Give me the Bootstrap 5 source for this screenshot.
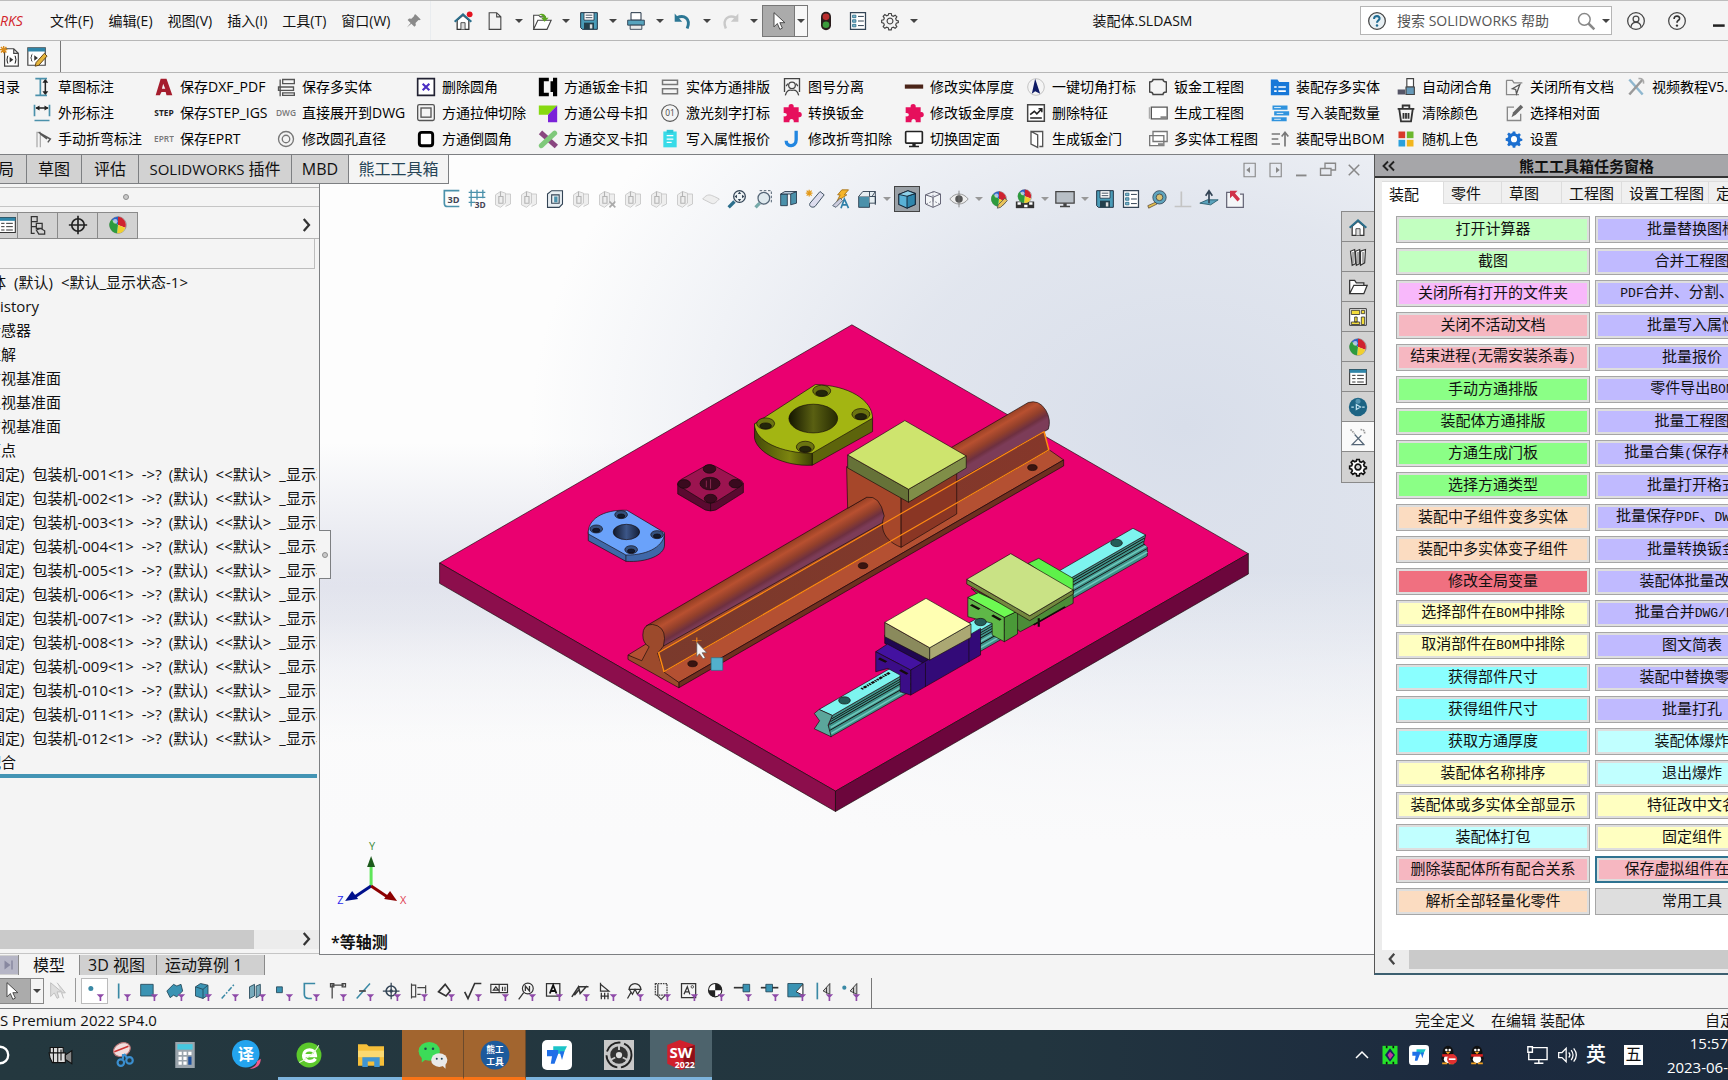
<!DOCTYPE html>
<html lang="zh-CN">
<head>
<meta charset="utf-8">
<meta name="viewport" content="width=device-width, initial-scale=1">
<title>装配体.SLDASM</title>
<link href="https://cdn.jsdelivr.net/npm/bootstrap@5.3.0/dist/css/bootstrap.min.css" rel="stylesheet">
<style>
:root{--line:#a9a9a9;--edge:#7d7f82;--chrome:#f4f4f4;--tabgrey:#d2d2d2}
body{font-family:"Open Sans","Noto Sans CJK SC",sans-serif;font-size:14px;line-height:20px;color:#111;background:var(--chrome);overflow:hidden}
button{font:inherit;color:inherit;background:none;border:0;padding:0;white-space:nowrap}
svg{display:block;flex:none}
.nw{white-space:nowrap}
.min0{min-width:0;min-height:0}
.s18{width:18px;height:18px}.s20{width:20px;height:20px}.s22{width:22px;height:22px}.s26{width:26px;height:26px}.s30{width:30px;height:30px}
.ic{display:block;flex:none;font-style:normal}.ic svg{width:100%;height:100%}
/* title bar */
.titlebar{height:41px;border-top:1px solid #bdbdbd;border-bottom:1px solid #b7b7b7}
.brand{width:34px;overflow:hidden;color:#d2232a;font-style:italic;font-size:14px}
.menus{gap:15px;width:396px;flex:none}
.menus button{flex:none}
.tool{width:32px;height:32px;display:flex;align-items:center;justify-content:center}
.caret-b{width:15px;height:32px;display:flex;align-items:center;justify-content:center}
.caret-b::after{content:"";border:4px solid transparent;border-top-color:#444;border-bottom:0}
.caret-b.dim::after{border-top-color:#999}
.selgrp{border:1px solid #777;height:32px;width:46px;margin:0 2px 0 1px}
.selgrp .tool{width:32px;background:#ababab;height:30px}.selgrp .caret-b{width:13px;height:30px;border-left:1px solid #777;background:#f7f7f7}
.searchbox{width:252px;height:29px;border:1px solid #b5b5b5;background:#fff;padding-left:6px}
.searchbox input{border:0;outline:0;background:none;width:184px;font-size:14px;color:#555}
.searchbox input::placeholder{color:#555;opacity:1}
.acct{gap:21px;padding-left:14px}
.macrobar{height:32px;border-bottom:1px solid #b7b7b7}
.macrobar>div{width:61px;border-right:1px solid #777}
/* ribbon */
.ribbon{height:81px;padding-top:1px}
.rcol{width:122px;flex:none}
.rcol-first{width:32px}.rcol-140{width:140px}.rcol-126{width:126px}.rcol-108{width:108px}
.ritem{display:flex;align-items:center;gap:6px;height:26px;color:#000}
.rcol-first .ritem{width:32px;justify-content:flex-end;padding-right:12px;overflow:hidden}
/* work area */
.work-tabs{width:449px;height:30px;border-top:1px solid var(--edge);position:relative;z-index:2}
.work-tabs button{font-size:16px;height:29px;background:var(--tabgrey);border-right:1px solid var(--edge);border-bottom:1px solid var(--edge);flex:none;overflow:hidden}
.work-tabs .on{background:var(--chrome);flex:1;color:#274556}
.work-tabs .cutl{width:27px;display:flex;justify-content:flex-end;align-items:center;padding-right:12px}
.t55{width:55px}.t57{width:57px}.t153{width:153px}
.latin{font-size:15px}
.sidepane{width:320px;flex:none;border-right:1px solid var(--edge);position:relative}
.grip{height:20px;border-top:1px solid #b5b5b5;border-bottom:1px solid #c5c5c5;margin-top:3px;padding-right:67px}
.dot{width:6px;height:6px;border-radius:50%;background:#c9c9c9;border:1px solid #8d8d8d}
.ptabs{height:27px;margin-top:5px;border-bottom:1px solid #b5b5b5}
.ptabs button{width:40px;height:27px;background:var(--tabgrey);border:1px solid #8a8a8a;border-left:0;display:flex;align-items:center;justify-content:center}
.ptabs button:first-child{width:18px;overflow:hidden;justify-content:flex-end}
.filterbox{height:30px;width:315px;border:1px solid #bdbdbd;border-left:0;border-top:0;background:#f4f4f4;outline:0}
.tree{font-size:15px;line-height:24px;width:317px;overflow:hidden;border-bottom:4px solid #4394b4;padding-top:1px}
.tree li{height:24px;white-space:nowrap;display:flex;gap:8px}
.tree .t1{margin-left:-9px}.tree .t2{margin-left:-11px}.tree .t3{margin-left:-14px}.tree .t4{margin-left:-10px}
.tree .nm{width:109px}
.tree .ar{width:19px}
.hs{height:19px;background:#ececec}
.hs .thumb{width:254px;background:#cacaca}
.paneend{height:5px;border-bottom:1px solid #c5c5c5;margin-bottom:1px}
.handle{position:absolute;right:-12px;top:376px;width:12px;height:49px;background:#f4f4f4;border:1px solid var(--edge);border-left:0;z-index:3}
.viewport{border-top:1px solid var(--edge);border-bottom:1px solid var(--edge);overflow:hidden;
background:linear-gradient(180deg,transparent 52%,rgba(252,252,253,.4) 64%,#fafafb 86%),
radial-gradient(ellipse 62% 60% at 82% 34%,#d8deea 0,rgba(221,226,236,.85) 45%,rgba(250,250,252,0) 100%),
linear-gradient(180deg,#fdfdfd 36%,#e0e2ec 54%,#e1e3ec 58%,#fafafa 74%)}
.scene{position:absolute;inset:0;width:100%;height:100%}
.hud{position:absolute;left:118px;top:31px;display:flex}
.hud button{width:26px;height:26px;display:flex;align-items:center;justify-content:center}
.hud .caret-b{width:14px;height:26px}
.hud .on{border:1px solid #444;background:#9aa0a6}
.wctl{position:absolute;right:7px;top:2px;display:flex}
.wctl button{width:26px;height:26px;display:flex;align-items:center;justify-content:center}
.vtabs{position:absolute;right:0;top:56px;width:33px;border:1px solid #8a8a8a;border-right:0}
.vtabs button{width:32px;height:30px;background:var(--tabgrey);display:flex;align-items:center;justify-content:center;border-bottom:1px solid #8a8a8a}
.vtabs button:last-child{border-bottom:0}.vtabs .on{background:#fafafa}
.viewname{position:absolute;left:11px;bottom:2px;font-size:16px;font-weight:600}
/* task pane */
.taskpane{width:354px;flex:none;border-left:1px solid #555;background:#ececec;border-bottom:2px solid #3c5f70;overflow:hidden}
.taskpane header{height:24px;background:#a6a6a9;border-top:1px solid var(--edge);border-bottom:2px solid #333;font-size:15px;line-height:18px;font-weight:700}
.pagetabs{height:26px;padding:3px 0 0 7px}
.pagetabs button{height:23px;font-size:15px;border:1px solid #ddd;border-left:0;background:#f0f0f0;text-align:left;padding-left:7px;flex:none}
.pagetabs .on{background:#fff;border-bottom:0;height:24px}
.w58{width:58px}.w60{width:60px}.w62{width:62px}.w87{width:87px}
.page{margin-left:7px;background:#fff;padding:12px 0 0 14px}
.cmds{display:grid;grid-template-columns:194px 194px;gap:5px}
.cmds button{height:27px;border:1px solid #a6a6a6;box-shadow:inset 0 0 0 2px #dedede;font-size:15px;line-height:20px;padding-bottom:4px;text-align:center}
.cmds small{font:13px/19px "Liberation Mono",monospace}
.g1{background:#c2ffc0}.vi{background:#f8b8fb}.pk{background:#f6b7c1}.g2{background:#8bff86}.pe{background:#fbdcc1}.rd{background:#f07080}.ye{background:#ffffc1}.cy{background:#8affff}.lc{background:#c1ffff}.lv{background:#c0baff}.gy{background:#dedede}
.cmds .focus{border:2px solid #2e7391}
/* bottom */
.sheettabs{height:20px}
.sheettabs button{font-size:16px;height:20px;line-height:18px;background:#d0d0d0;border-right:1px solid #8a8a8a;text-align:left;padding-left:8px}
.sheettabs .on{background:var(--chrome);padding-left:14px;width:61px}
.sheettabs .lastbtn{width:19px;padding:0}.t77{width:77px}.t108{width:108px}
.filters{height:34px;border-bottom:1px solid var(--edge);padding-top:3px}
.filters .box{width:872px;border-right:1px solid #777}
.filters .f{width:27px;height:26px;display:flex;align-items:center;justify-content:center;flex:none}
.filters .on{background:#fff;border:1px solid #bbb}
.filters .sel{width:31px;height:26px;background:#ababab;border:1px solid #888;border-left:0;display:flex;align-items:center;justify-content:center;padding-right:6px}
.filters .caret-b{width:13px;height:26px;border:1px solid #888;border-left:0}
.sep{width:1px;height:24px;background:#999;margin:0 5px 0 4px}
.status{height:21px;font-size:15px;line-height:23px;overflow:hidden}
.status .custom{width:71px;padding-left:48px;margin-left:24px}
.taskbar{height:50px;background:linear-gradient(90deg,#24383f,#22353f 60%,#1c2a3f 85%,#1b2b3d);color:#fff}
.app{width:62px;height:50px;display:flex;align-items:center;justify-content:center;flex:none;border-bottom:3px solid transparent;padding-top:2px}
.app:first-child{width:24px;padding-right:30px;overflow:hidden}
.app.run{border-bottom:3px solid #7db4dd;background-clip:padding-box}
.app.hot{background:#a2652f;border-bottom-color:#f97316;border-right:1px solid #6b4a2c}
.app.cur{background:#4d636c}
.tray{gap:9px}.trayrest{width:21px}
.ime{font-size:20px;font-weight:500}
.imebox{background:#fff;color:#111;width:19px;height:20px;line-height:19px;text-align:center;font-size:16px;margin-left:9px}
.clock{width:70px;font-size:15px;line-height:24px;text-align:right;margin-left:6px;white-space:nowrap}
</style>
<script src="https://cdn.jsdelivr.net/npm/bootstrap@5.3.0/dist/js/bootstrap.bundle.min.js"></script>
</head>
<body class="vh-100 d-flex flex-column">

<nav class="titlebar d-flex align-items-center flex-shrink-0">
  <div class="brand">RKS</div>
  <div class="menus d-flex align-items-center ps-3">
    <button>文件(F)</button><button>编辑(E)</button><button>视图(V)</button><button>插入(I)</button><button>工具(T)</button><button>窗口(W)</button>
    <i class="ic s18" data-ic="pin"></i>
  </div>
  <div class="border-start border-secondary-subtle h-100 d-flex align-items-center ps-3" id="std"></div>
  <div class="flex-grow-1 text-center nw ps-1">装配体.SLDASM</div>
  <div class="searchbox d-flex align-items-center">
    <i class="ic s20 me-2" data-ic="helpblue"></i>
    <input type="search" aria-label="搜索" placeholder="搜索 SOLIDWORKS 帮助">
    <i class="ic s20" data-ic="search"></i><button class="caret-b ms-1" aria-label="选项"></button>
  </div>
  <div class="acct d-flex align-items-center">
    <button aria-label="用户"><i class="ic s20" data-ic="user"></i></button>
    <button aria-label="帮助"><i class="ic s20" data-ic="help"></i></button>
    <button aria-label="最小化"><i class="ic s20" data-ic="min"></i></button>
  </div>
</nav>

<div class="macrobar flex-shrink-0"><div class="h-100 d-flex align-items-center gap-1"><i class="ic s22" data-ic="macronew"></i><i class="ic s22" data-ic="macroedit"></i></div></div>

<div class="ribbon d-flex flex-shrink-0 overflow-hidden" id="ribbon"></div>

<main class="d-flex flex-grow-1 min0">
  <div class="d-flex flex-column flex-grow-1 min0">
    <div class="d-flex flex-grow-1 min0">
      <aside class="sidepane d-flex flex-column">
        <div class="work-tabs d-flex">
          <button class="cutl">局</button><button class="t55">草图</button><button class="t57">评估</button><button class="t153"><span class="latin">SOLIDWORKS</span> 插件</button><button class="t57">MBD</button><button class="on">熊工工具箱</button>
        </div>
        <div class="grip d-flex align-items-center justify-content-center"><span class="dot"></span></div>
        <div class="ptabs d-flex align-items-center flex-shrink-0">
          <button aria-label="属性"><i class="ic s20" data-ic="props"></i></button><button aria-label="配置"><i class="ic s20" data-ic="config"></i></button><button aria-label="尺寸"><i class="ic s20" data-ic="target"></i></button><button aria-label="外观"><i class="ic s22" data-ic="ball"></i></button>
          <i class="ic s18 ms-auto me-1" data-ic="chev"></i>
        </div>
        <input class="filterbox flex-shrink-0" aria-label="过滤">
        <ul class="tree list-unstyled mb-0 flex-shrink-0" id="tree"></ul>
        <div class="hs d-flex justify-content-between mt-auto flex-shrink-0"><div class="thumb"></div><i class="ic s18 me-1" data-ic="chev"></i></div>
        <div class="paneend flex-shrink-0"></div>
        <div class="handle d-flex align-items-center justify-content-center"><span class="dot"></span></div>
      </aside>

      <section class="viewport flex-grow-1 position-relative min0">
        <svg class="scene" viewBox="320 155 1053 800" preserveAspectRatio="xMidYMid meet">
          <defs>
            <linearGradient id="cyl" gradientUnits="userSpaceOnUse" x1="408" y1="948" x2="453" y2="996"><stop offset="0" stop-color="#8f3c22"/><stop offset=".3" stop-color="#b85030"/><stop offset=".6" stop-color="#93402b"/><stop offset=".85" stop-color="#6e3040"/><stop offset="1" stop-color="#7c3c58"/></linearGradient>
            <linearGradient id="web" x1="0" y1="0" x2="1" y2="0"><stop offset="0" stop-color="#7a3a2c"/><stop offset="1" stop-color="#85372a"/></linearGradient>
            <linearGradient id="ol" x1="0" y1="0" x2="1" y2="0"><stop offset="0" stop-color="#454a08"/><stop offset=".3" stop-color="#7c850f"/><stop offset=".49" stop-color="#3a3f05"/><stop offset=".5" stop-color="#5d640c"/><stop offset="1" stop-color="#5d640c"/></linearGradient>
            <linearGradient id="hole" x1="0" y1="0" x2="1" y2="0"><stop offset="0" stop-color="#141600"/><stop offset=".5" stop-color="#5a6012"/><stop offset="1" stop-color="#262a02"/></linearGradient>
            <linearGradient id="bh" x1="0" y1="0" x2="1" y2="0"><stop offset="0" stop-color="#10182c"/><stop offset=".5" stop-color="#3c5688"/><stop offset="1" stop-color="#141f38"/></linearGradient>
          </defs>
          <g transform="translate(429 310) scale(.53 .334)" stroke="#140a0a" stroke-width="1.5" stroke-linejoin="round">
            <g id="plate">
              <path fill="#ea0070" d="M18 759 797 45 1546 731 766 1443Z"/><path fill="#8c0e4c" d="M18 759 766 1443V1504L18 820Z"/><path fill="#6c063c" d="M766 1443 1546 731V792L766 1504Z"/>
            </g>
            <g id="olive">
              <path fill="url(#ol)" d="M613 342V385C618 430 670 470 722 466L836 365V322Z"/>
              <path fill="#a3b512" d="M613 342 728 224C790 226 836 270 836 325L722 430C665 430 613 395 613 342Z"/>
              <path d="M722 430V466"/>
              <ellipse cx="724" cy="326" rx="46" ry="43" fill="url(#hole)"/>
              <g fill="#6b7410" stroke-width="1.5"><ellipse cx="740" cy="243" rx="17" ry="17"/><ellipse cx="634" cy="341" rx="17" ry="17"/><ellipse cx="814" cy="313" rx="17" ry="17"/><ellipse cx="709" cy="411" rx="17" ry="17"/></g>
              <g fill="#23260a"><ellipse cx="740" cy="250" rx="11" ry="9"/><ellipse cx="634" cy="348" rx="11" ry="9"/><ellipse cx="814" cy="320" rx="11" ry="9"/><ellipse cx="709" cy="418" rx="11" ry="9"/></g>
            </g>
            <g id="maroon">
              <path fill="#5a0a30" d="M468 522V552L520 600Q530 606 540 600L592 548V520Z"/>
              <path fill="#9c1450" d="M468 522Q468 515 475 508L520 468Q528 462 538 468L588 512Q594 518 588 528L540 576Q530 584 520 576L473 530Q468 526 468 522Z"/>
              <path d="M530 580V603"/>
              <g fill="#3a0a1e"><ellipse cx="529" cy="521" rx="19" ry="19"/><ellipse cx="528" cy="477" rx="12" ry="13"/><ellipse cx="480" cy="522" rx="12" ry="13"/><ellipse cx="577" cy="521" rx="12" ry="13"/><ellipse cx="530" cy="566" rx="12" ry="13"/></g>
              <path fill="none" stroke="#b03a68" d="M522 512V532M530 508V536"/>
            </g>
            <g id="blue">
              <path fill="#3f68a8" d="M299 665V692L370 754C410 758 443 735 443 705V672Z"/>
              <path fill="#6aa2fa" d="M372 601 443 668C443 705 415 736 370 735L299 672C297 630 325 598 372 601Z"/>
              <path d="M370 735V754"/>
              <ellipse cx="371" cy="666" rx="25" ry="23" fill="url(#bh)"/>
              <g fill="#34517f"><ellipse cx="361" cy="614" rx="12" ry="12"/><ellipse cx="314" cy="657" rx="12" ry="12"/><ellipse cx="429" cy="674" rx="12" ry="12"/><ellipse cx="380" cy="719" rx="12" ry="12"/></g>
              <g fill="#101a30"><ellipse cx="361" cy="618" rx="7" ry="6"/><ellipse cx="314" cy="661" rx="7" ry="6"/><ellipse cx="429" cy="678" rx="7" ry="6"/><ellipse cx="380" cy="723" rx="7" ry="6"/></g>
            </g>
            <g id="rail">
              <path fill="#b45032" d="M374 1035 418 992 1170 420 1197 450 470 1117Z"/>
              <path fill="#6e3020" d="M470 1117 1197 450V468L470 1133Z"/>
              <path fill="url(#web)" d="M432 1028 1160 365 1169 420 442 1085Z"/>
              <path fill="#a04a2e" stroke="none" d="M438 1000 1150 350 1160 365 432 1028Z"/>
              <path fill="url(#cyl)" d="M408 948 1130 278Q1150 268 1163 300Q1174 330 1168 358L441 1008Z"/>
              <path fill="#9c4a2c" d="M402 975Q402 943 420 943Q443 948 443 985L441 1008 430 1030 442 1086 470 1117V1133L374 1048V1035L400 1052 414 1010Q402 1000 402 975Z"/>
              <g fill="#3a1410"><ellipse cx="496" cy="1061" rx="9" ry="9"/><ellipse cx="818" cy="767" rx="9" ry="9"/><ellipse cx="1138" cy="473" rx="9" ry="9"/></g>
              <path fill="#a6472a" d="M787 470 890 560V712C855 690 850 650 858 618Q850 555 825 562L789 595Z"/>
              <path fill="#8a3624" d="M890 560 995 480V612L890 712Z"/>
              <path fill="none" stroke="#ff8a12" stroke-width="3" d="M432 1028 1160 365 1169 420 442 1085Z"/>
              <path fill="#667238" d="M789 435 904 538V577L789 474Z"/><path fill="#808e48" d="M904 538 1013 438V474L904 577Z"/><path fill="#cee46e" d="M897 332 1013 438 904 538 789 435Z"/>
            </g>
            <g id="lm">
              <path fill="#3f958b" d="M760 1216 1352 675 1348 700 1355 712V738L757 1280 752 1250Z"/>
              <path fill="none" d="M759 1226 1350 684M757 1234 1348 694M755 1243 1350 702M754 1262 1354 716" stroke-width="2"/>
              <path fill="none" stroke="#6fc7bb" d="M757 1252 1353 708M758 1270 1355 726" stroke-width="4"/>
              <path fill="#7df4ef" d="M735 1198 1328 655 1352 675 760 1216Z"/>
              <path fill="#5ba69b" d="M726 1210 735 1198 760 1216 752 1245 758 1280 726 1256 736 1232Z"/>
              <ellipse cx="783" cy="1171" rx="11" ry="11" fill="#245c58"/><ellipse cx="1297" cy="699" rx="11" ry="11" fill="#245c58"/>
              <path fill="none" stroke-width="6" stroke-dasharray="4 2 7 2 3 2" d="M815 1137 868 1088"/>
              <path fill="#5ef14a" d="M1130 760 1150 745 1215 805V850L1195 830Z"/>
              <path fill="#4c8c38" d="M1022 835 1133 917 1215 840V880L1115 965Z"/>
              <path fill="none" stroke-width="4" d="M1140 945 1200 890M1150 950 1150 925"/>
              <path fill="#5fb848" d="M1016 862 1085 922V995L1062 975V940L1016 920Z"/>
              <path fill="#4a9a38" d="M1085 922 1110 903V972L1085 995Z"/><path fill="#6dfa52" d="M1016 862 1036 848 1110 903 1085 922Z"/>
              <path fill="#74883f" d="M1014 808 1133 917 1215 840V852L1133 932 1014 822Z"/><path fill="#c9e285" d="M1097 731 1215 840 1133 917 1014 808Z"/>
              <ellipse cx="1040" cy="936" rx="11" ry="11" fill="#245c58"/>
              <path fill="#200650" d="M859 975 944 1045 1022 975V1000L944 1070 859 1000Z"/>
              <path fill="#4312a0" d="M842 1025 864 1002 935 1062 908 1080Z"/>
              <path fill="#330a78" d="M908 1080 1040 955V1035L908 1155Z"/><path d="M936 1058V1130M1018 980V1056"/>
              <path fill="#3b0d88" d="M842 1025 908 1080V1155L888 1145V1095L865 1075 842 1085Z"/>
              <path fill="#8a8a5c" d="M859 937 944 1013V1050L859 980Z"/><path fill="#aba873" d="M944 1013 1022 942V982L944 1050Z"/><path fill="#ffffb2" d="M937 865 1022 942 944 1013 859 937Z"/>
              <path fill="none" stroke-width="6" d="M848 1045 862 1056M888 1080 902 1092M1022 884 1038 898M1062 916 1078 930"/>
            </g>
            <path fill="none" stroke="#ff8a12" stroke-width="2" d="M495 992H513M504 982V1002"/>
            <path fill="#f5f5f5" stroke="#555" d="M504 996V1040L509 1031 516 1046 520 1043 514 1028H523Z"/>
            <path fill="#52b0cc" stroke="#2a6a80" d="M531 1043H553V1081H531Z"/>
          </g>
          <g fill="none">
            <path d="M370 887V866" stroke="#5fe65a" stroke-width="3"/><path fill="#1c5a1c" d="M366 868 370 857 374 868Z"/>
            <path d="M370 887 352 899" stroke="#00108c" stroke-width="3"/><path fill="#00108c" d="M344 902 351 892 357 900Z"/>
            <path d="M370 887 388 899" stroke="#8c0000" stroke-width="3"/><path fill="#8c0000" d="M396 902 389 892 383 900Z"/>
          </g>
          <g font-family="Open Sans, sans-serif" font-size="11"><text x="368" y="851" fill="#3a8a3a">Y</text><text x="336" y="905" fill="#2a2aee">Z</text><text x="399" y="905" fill="#e03c50">X</text></g>
        </svg>
        <div class="hud" id="hud"></div>
        <div class="wctl">
          <button aria-label="左"><i class="ic s18" data-ic="pl"></i></button><button aria-label="右"><i class="ic s18" data-ic="pr"></i></button><button aria-label="最小化"><i class="ic s18" data-ic="wmin"></i></button><button aria-label="还原"><i class="ic s18" data-ic="wres"></i></button><button aria-label="关闭"><i class="ic s18" data-ic="wx"></i></button>
        </div>
        <div class="vtabs" id="vtabs"></div>
        <div class="viewname">*等轴测</div>
      </section>
    </div>
    <div class="sheettabs d-flex flex-shrink-0">
      <button class="lastbtn" aria-label="末页"><i class="ic s18" data-ic="last"></i></button><button class="on">模型</button><button class="t77">3D 视图</button><button class="t108">运动算例 1</button>
    </div>
  </div>

  <section class="taskpane d-flex flex-column">
    <header class="d-flex align-items-center flex-shrink-0"><i class="ic s18 ms-1" data-ic="dbl"></i><span class="flex-grow-1 text-center nw ps-5">熊工工具箱任务窗格</span></header>
    <div class="pagetabs d-flex flex-shrink-0"><button class="on w62">装配</button><button class="w58">零件</button><button class="w60">草图</button><button class="w60">工程图</button><button class="w87">设置工程图</button><button class="w60">定制</button></div>
    <div class="page flex-grow-1"><div class="cmds" id="cmds"></div></div>
    <div class="hs d-flex ms-2 flex-shrink-0"><i class="ic s18 me-2" data-ic="chevl"></i><div class="thumb flex-grow-1"></div></div>
    <div class="pt-1"></div>
  </section>
</main>

<div class="filters d-flex flex-shrink-0"><div class="box d-flex" id="filters"></div></div>
<div class="status d-flex flex-shrink-0 nw"><span>S Premium 2022 SP4.0</span><span class="ms-auto me-3">完全定义</span><span class="pe-5">在编辑 装配体</span><span class="custom overflow-hidden">自定义</span></div>
<footer class="taskbar d-flex align-items-center flex-shrink-0 overflow-hidden">
  <div class="d-flex" id="apps"></div>
  <div class="tray d-flex align-items-center ms-auto flex-shrink-0" id="tray"></div>
</footer>

<script>
const fun='<path fill="#8e4aa8" d="M14 16h9l-3.500 3.500V25h-2v-5.500z"/>';
const cubeG='<path fill="#eee" stroke="#c4c4c4" d="M3 7l6-4 6 2v12l-6 5-6-3zM15 6h6v12l-6 3"/><path fill="none" stroke="#b4b4b4" stroke-width="1.300" d="M7 9h5v8H7zM9 3v6"/>';
const ball='<circle cx="12" cy="12" r="9" fill="#fff" stroke="#555" stroke-width=".6"/><path fill="#2b62c4" d="M12 12 5 6a9 9 0 0 1 8-3z"/><path fill="#cf2330" d="M12 12V3a9 9 0 0 1 8 12z"/><path fill="#f0cf2e" d="m12 12 8 3a9 9 0 0 1-9 6z"/><path fill="#2d9b3e" d="M12 12l-1 9a9 9 0 0 1-6-15z"/><circle cx="9" cy="8" r="2.500" fill="#fff" opacity=".6"/>';
const puzzle='<path fill="#e60f5c" d="M2 5h6c-1-5 7-5 6 0h6v6c5-1 5 7 0 6v6h-6c1-5-6-5-5 0H2v-7c5 1 5-5 0-4z"/>';
const gearp='M12 8.500a3.500 3.500 0 1 0 .01 0M10.500 3h3l.5 2.500 2 .9 2.200-1.400 2 2-1.400 2.200.8 2L22 12v2l-2.400.6-.8 2 1.400 2.200-2 2-2.200-1.400-2 .8-.5 2.400h-3L10 20.200l-2-.8-2.200 1.400-2-2 1.400-2.200-.8-2L2 14v-3l2.400-.5.8-2-1.400-2.200 2-2L8 5.700l2-.8z';
const I={
pin:'<path fill="#8a8a8a" d="m14 3 7 7-2 1-1-.5-4 4 .5 3-2 2-4-4-6 5 5-6-4-4 2-2 3 .5 4-4-.5-1z"/>',
home:'<path fill="#fff" stroke="#333" stroke-width="1.500" d="M5 11v11h14V11l-7-6z"/><path fill="none" stroke="#2c6f8c" stroke-width="2.500" d="m2 13 10-9 10 9"/><path fill="#ddd" stroke="#333" d="M9.500 22v-8h5v8"/>',
new:'<path fill="#f2f2f2" stroke="#444" stroke-width="1.300" d="M5 2h9l5 5v15H5zM14 2v5h5"/>',
open:'<path fill="#fff" stroke="#444" stroke-width="1.300" d="M2 22V5h6l2 2h6v4M2 22l5-11h16l-5 11z"/><path fill="#5ba620" d="M8 4c5-2 8 0 9 4h3l-5 5-4-5h3c-1-2-3-3-6-4z"/>',
save:'<path fill="#4a9cb8" stroke="#234" stroke-width="1.200" d="M2 2h20v20H4l-2-2z"/><path fill="#fff" stroke="#234" d="M6 2h12v9H6z"/><path stroke="#234" d="M8 5h8M8 8h8"/><path fill="#24404c" d="M6 14h12v8H6z"/><path fill="#ddd" d="M13 16h3v5h-3z"/>',
print:'<path fill="#fff" stroke="#234" stroke-width="1.200" d="M6 2h12v9H6z"/><path fill="#57a3bd" stroke="#234" d="M2 11h20v6H2z"/><path fill="#e8e8e8" stroke="#234" d="M5 17h14v5H5z"/>',
undo:'<path fill="none" stroke="#2c7794" stroke-width="3.500" d="M5 8c8-4 17 1 12 13"/><path fill="#2c7794" d="M2 3v10h9z"/>',
redo:'<path fill="none" stroke="#c9c9c9" stroke-width="3" d="M19 8C11 4 2 9 7 21"/><path fill="#c9c9c9" d="M22 3v10h-9z"/>',
cur:'<path fill="#fff" stroke="#333" d="M6 2v17l4-4 3 7 3-1.500-3-6.500h6z"/>',
curg:'<path fill="#ddd" stroke="#bbb" d="M4 3v15l4-4 3 6 2-1-2-6h5zM11 3l9 11h-4l2 6"/>',
light:'<rect x="6" y="1" width="12" height="22" rx="6" fill="#2a1c1c"/><circle cx="12" cy="7" r="4" fill="#b92d2d"/><circle cx="12" cy="16.500" r="4" fill="#3c9a3c"/>',
list:'<path fill="#fff" stroke="#345" stroke-width="1.500" d="M3 2h18v20H3z"/><path fill="#7db8cc" stroke="#2c6f8c" d="M5.500 5h4v3h-4zM5.500 10.500h4v3h-4zM5.500 16h4v3h-4z"/><path stroke="#345" stroke-width="1.200" d="M12 6.500h7M12 12h7M12 17.500h7"/>',
gear:'<path fill="none" stroke="#444" stroke-width="1.400" d="'+gearp+'"/>',
geark:'<path fill="#fff" stroke="#111" stroke-width="2" d="'+gearp+'"/>',
gearb:'<path fill="#1b6fd0" fill-rule="evenodd" d="'+gearp+'"/><circle cx="12" cy="12.500" r="3.500" fill="#fff"/>',
helpblue:'<circle cx="12" cy="12" r="10" fill="#e8f0f4" stroke="#444" stroke-width="1.500"/><path fill="none" stroke="#1f6b92" stroke-width="2.500" d="M8.500 9.500c0-5 7.500-4 6.500 0-.6 2-3 2-3 4.500"/><circle cx="12" cy="17.500" r="1.500" fill="#1f6b92"/>',
help:'<circle cx="12" cy="12" r="10" fill="none" stroke="#444" stroke-width="1.500"/><path fill="none" stroke="#333" stroke-width="2" d="M8.500 9.500c0-5 7.500-4 6.500 0-.6 2-3 2-3 4.500"/><circle cx="12" cy="17.500" r="1.400" fill="#333"/>',
user:'<circle cx="12" cy="12" r="10" fill="none" stroke="#444" stroke-width="1.500"/><circle cx="12" cy="9.500" r="3.500" fill="none" stroke="#444" stroke-width="1.500"/><path fill="none" stroke="#444" stroke-width="1.500" d="M6 19c1-7 11-7 12 0"/>',
search:'<circle cx="10" cy="10" r="7" fill="none" stroke="#888" stroke-width="1.800"/><path stroke="#888" stroke-width="3" d="m15 15 7 7"/>',
min:'<path fill="#222" d="M6 16h14v3H6z"/>',
macronew:'<path fill="#fff" stroke="#444" stroke-width="1.300" d="M5 3h10l5 5v14H5zM15 3v5h5"/><path stroke="#d88a1a" stroke-width="1.500" d="M4 0v8M0 4h8M1 1l6 6M7 1 1 7"/><path fill="none" stroke="#333" stroke-width="1.300" d="M9 11c-2 0 0 4-2 4 2 0 0 4 2 4M16 11c2 0 0 4 2 4-2 0 0 4-2 4"/><path fill="#333" d="m10.500 12 4 3-4 3z"/>',
macroedit:'<path fill="#fff" stroke="#444" stroke-width="1.300" d="M2 2h19v19H2z"/><path fill="#2f85a8" d="M2 2h19v4H2z"/><path fill="#333" d="m9 10 4 3-4 3z"/><path fill="none" stroke="#333" d="M7 9c-2 0 0 4-2 4 2 0 0 4 2 4"/><path fill="#e4b53b" stroke="#5c3d12" d="m10 22 1-4 9-10 3 3-9 10z"/>',
props:'<path fill="#fff" stroke="#333" stroke-width="1.300" d="M2 3h20v18H2z"/><path fill="#2f85a8" d="M2 3h20v4H2z"/><path stroke="#333" stroke-width="1.200" d="M5 10h4M5 14h4M5 18h4M11 10h8M11 14h8M11 18h8"/>',
config:'<path fill="none" stroke="#333" stroke-width="1.500" d="M4 2h7v6H4zM4 8v14h4M4 14h6M10 10h7v6h-7zM10 18l5-2 5 3v4h-7z"/>',
target:'<circle cx="12" cy="12" r="7.500" fill="none" stroke="#222" stroke-width="2"/><path stroke="#222" stroke-width="2" d="M12 1v22M1 12h22"/>',
ball,
chev:'<path fill="none" stroke="#333" stroke-width="3" d="m9 4 7 8-7 8"/>',chevl:'<path fill="none" stroke="#444" stroke-width="3" d="m15 5-6 7 6 7"/>',
dbl:'<path fill="none" stroke="#222" stroke-width="2.500" d="m12 6-6 6 6 6M20 6l-6 6 6 6"/>',
last:'<path fill="#b6b6c6" d="M0 0h24v24H0z"/><path fill="#8888a0" d="m6 6 8 6-8 6z"/><path stroke="#8888a0" stroke-width="2" d="M16 6v12"/>',
pl:'<path fill="none" stroke="#888" stroke-width="1.500" d="M4 3h15v18H4z"/><path fill="#888" d="m12 8-5 4 5 4z"/>',pr:'<path fill="none" stroke="#888" stroke-width="1.500" d="M4 3h15v18H4z"/><path fill="#888" d="m12 8 5 4-5 4z"/>',
wmin:'<path fill="#888" d="M4 18h14v2.500H4z"/>',wres:'<path fill="none" stroke="#888" stroke-width="1.800" d="M8 9V3h14v9h-6M2 10h14v9H2z"/>',wx:'<path stroke="#888" stroke-width="2" d="m5 5 14 14M19 5 5 19"/>',
/* ribbon */
r1:'<path fill="none" stroke="#222" stroke-width="1.800" d="M16 5v14"/><path fill="#222" d="m12.500 7 3.500-5 3.500 5zM12.500 17l3.500 5 3.500-5z"/><path fill="none" stroke="#4b91ab" stroke-width="2" d="M4 2h14M10 2v20M4 22h14"/>',
r2:'<path fill="none" stroke="#4b91ab" stroke-width="2" d="M3 2v14M21 2v14M3 21h18"/><path stroke="#222" stroke-width="1.800" d="M5 6h14"/><path fill="#222" d="M9 3 4 6l5 3zM15 3l5 3-5 3z"/>',
r3:'<path fill="none" stroke="#aaa" stroke-width="1.500" d="M6 22V4h4v18"/><path fill="none" stroke="#555" stroke-width="1.800" d="m8 4 14 8-3 4M10 6l8 6"/>',
A:'<path fill="#a51d2d" fill-rule="evenodd" d="M8 2h7l7 20h-7l-1-4H9l-2 4H2zM11 8l-1.500 6h4z"/>',
st:'<text x="12" y="16" text-anchor="middle" font-size="10" font-weight="700" font-family="Open Sans" fill="#222">STEP</text>',ep:'<text x="12" y="16" text-anchor="middle" font-size="10" font-weight="600" font-family="Open Sans" fill="#777">EPRT</text>',dw:'<text x="12" y="16" text-anchor="middle" font-size="10" font-weight="600" font-family="Open Sans" fill="#777">DWG</text>',
multi:'<path fill="none" stroke="#555" stroke-width="1.600" d="M8 3h14v5H8zM3 12h18v4H3zM8 19h14v3H8zM5 3v20"/>',
ring:'<circle cx="12" cy="12" r="9" fill="none" stroke="#777" stroke-width="1.600"/><circle cx="12" cy="12" r="4.500" fill="none" stroke="#777" stroke-width="1.600"/>',
bx:'<path fill="#fff" stroke="#223" stroke-width="2" d="M2 2h20v20H2z"/><path stroke="#4a2ec4" stroke-width="2.500" d="m8 8 8 8M16 8l-8 8"/>',
sq2:'<rect x="2" y="2" width="20" height="19" rx="2" fill="none" stroke="#555" stroke-width="1.600"/><rect x="6" y="6" width="12" height="11" fill="none" stroke="#555" stroke-width="1.600"/>',
sqb:'<rect x="4" y="4" width="16" height="16" rx="3" fill="#fff" stroke="#000" stroke-width="3.500"/>',
br:'<path fill="#000" d="M1 1h12v4H7v14h6v4H1zM15 5h3V1h5v22h-5v-5h-3z"/>',
gp:'<path fill="#87d911" d="M1 3h22L12 14H1z"/><path fill="#7a22d8" d="M23 3v20H12V14z"/>',
xx:'<path stroke="#8a4680" stroke-width="6" d="m3 4 19 17"/><path stroke="#7fc97a" stroke-width="6" stroke-linecap="round" d="m20 5-16 15"/>',
lines:'<path fill="none" stroke="#777" stroke-width="1.800" d="M3 4h18v5H3zM3 14h18v6H3z"/>',
n01:'<circle cx="12" cy="12" r="10" fill="none" stroke="#555" stroke-width="1.300"/><text x="12" y="16" text-anchor="middle" font-size="10" font-family="Open Sans" fill="#444">01</text>',
clip:'<path fill="#38dbe8" d="M4 3h16v19H4z"/><path stroke="#fff" stroke-width="1.500" d="M8 8h8M8 12h8M8 16h6"/><path fill="#2cc8d8" d="M8 1h8v4H8z"/>',
split:'<path fill="none" stroke="#444" stroke-width="1.600" d="M3 18V2h18v16"/><circle cx="12" cy="10" r="4" fill="none" stroke="#444" stroke-width="1.500"/><path fill="none" stroke="#444" stroke-width="1.500" d="M4 22c2-8 6-6 8-6s6-2 8 6M7 8l-2 3M17 8l2 3"/>',
puzzle,
J:'<path fill="none" stroke="#2286e0" stroke-width="4" d="M17 2v11c0 9-12 9-12 1"/>',
dash:'<path fill="#4a2418" d="M1 9h22v5H1z"/>',
mon:'<rect x="2" y="3" width="20" height="14" rx="1" fill="#fff" stroke="#222" stroke-width="2"/><path fill="#222" d="M10 17h4v3h4v2H6v-2h4z"/>',
nav:'<circle cx="12" cy="12" r="10" fill="none" stroke="#bbb"/><path fill="#101c66" d="m11 2 6 18-6-3-4 3z"/>',
chart:'<path fill="#fff" stroke="#444" stroke-width="1.800" d="M2 2h20v20H2z"/><path fill="none" stroke="#222" stroke-width="1.800" d="m5 14 5-4 3 3 6-6M15 7h4v4M5 18h14"/>',
door:'<path fill="#fff" stroke="#555" stroke-width="1.600" d="M6 3h14v18h-4M6 3l8 4v15l-8-4z"/>',
plaque:'<path fill="none" stroke="#444" stroke-width="1.600" d="M6 3h12c0 2 2 3 4 3v12c-2 0-4 1-4 3H6c0-2-2-3-4-3V6c2 0 4-1 4-3z"/>',
sheet:'<path fill="#fff" stroke="#555" stroke-width="1.600" d="M4 5h19v14H4z"/><path fill="#888" d="M15 16h8v3h-8zM1 5v14h1V5z"/>',
sheets:'<path fill="#fff" stroke="#777" stroke-width="1.600" d="M6 3h17v12H6zM2 8h17v12H2z"/><path fill="#888" d="M12 17h7v3h-7z"/>',
fold:'<path fill="#1878d8" d="M1 3h8l2 3h12v16H1z"/><path stroke="#fff" stroke-width="2" d="M5 12h3M10 12h9M5 17h3M10 17h9"/>',
rows:'<path fill="#2f93de" d="M3 3h18v5H3zM5 10h18v5H5zM2 17h18v5H2z"/><path stroke="#fff" d="M5 5.500h8M8 12.500h8M5 19.500h8"/>',
exp:'<path stroke="#777" stroke-width="1.800" d="M2 6h10M2 12h8M2 18h10"/><path fill="none" stroke="#777" stroke-width="2" d="M18 21V5M14 9l4-5 4 5"/>',
blocks:'<path fill="#fff" stroke="#444" stroke-width="1.400" d="M13 2h8v10h-8z"/><path fill="#6699b8" stroke="#444" stroke-width="1.400" d="M12 12h10v9H12z"/><path fill="#556" d="M2 15h9v6H2z"/>',
trash:'<path fill="none" stroke="#333" stroke-width="2.200" d="M2 7h20M8 6V3h8v3M4 8l2 14h12l2-14M9 12v7M12 12v7M15 12v7"/>',
win:'<path fill="#d83b2b" d="M3 3h8v8H3z"/><path fill="#6cb82e" d="M13 3h8v8h-8z"/><path fill="#2aa0dc" d="M3 13h8v8H3z"/><path fill="#f2b61d" d="M13 13h8v8h-8z"/>',
fc:'<path fill="none" stroke="#888" stroke-width="1.500" d="M3 4h7l2 3h10M3 4v17h15"/><path fill="none" stroke="#555" stroke-width="1.500" d="m19 9-9 5 4 1 1 5z"/>',
edit:'<path fill="none" stroke="#888" stroke-width="1.600" d="M12 5H4v16h16v-8"/><path fill="#666" d="m9 17 2-6 9-9 3 3-9 9z"/>',
tools:'<path stroke="#8fb7cf" stroke-width="3" d="M4 3l16 18"/><path fill="none" stroke="#999" stroke-width="3" d="m20 3-8 9-8 9"/><path fill="none" stroke="#aaa" stroke-width="2" d="M15 2c4-1 7 2 6 6"/>',
/* view toolbar */
s3d:'<path fill="none" stroke="#4b91ab" stroke-width="2" d="M22 2H4v15c0 3 1 4 4 4h14"/><text x="15" y="17" text-anchor="middle" font-size="11" font-weight="700" font-family="Open Sans" fill="#445">3D</text>',
g3d:'<path stroke="#4b91ab" stroke-width="1.600" d="M2 4h20M2 10h20M2 16h8M5 1v20M12 1v12M19 1v10"/><text x="16" y="23" text-anchor="middle" font-size="10" font-weight="700" font-family="Open Sans" fill="#445">3D</text>',
cg:cubeG,cgx:cubeG+'<path stroke="#aaa" stroke-width="2" d="m15 15 7 7M22 15l-7 7"/>',sur:'<path fill="#eee" stroke="#c4c4c4" d="M2 12c6-7 9-5 14-3l6 3c-4 4-6 7-10 5z"/>',
ck:'<path fill="#e8eef2" stroke="#345" stroke-width="1.300" d="M3 6l5-4h13v16l-4 4H3zM8 7h9v10H8z"/><path fill="#4b91ab" d="M11 9h4v7h-4z"/>',
zf:'<path stroke="#2c6f8c" stroke-width="4" d="m9 15-7 7"/><circle cx="15" cy="9" r="7" fill="#eef2f4" stroke="#345" stroke-width="1.500"/><path fill="#345" d="m15 3 2 3h-4zM15 15l2-3h-4zM9 9l3-2v4zM21 9l-3-2v4z"/>',
za:'<path fill="none" stroke="#345" stroke-dasharray="3 2" d="M8 2h14v14"/><circle cx="13" cy="11" r="7" fill="#dfe9ee" stroke="#567" stroke-width="1.500"/><path stroke="#7aa" stroke-width="4" d="m8 17-5 5"/>',
sec:'<path fill="#4b91ab" stroke="#234" d="M2 6h8v14H2zM14 5l7-2v14l-7 2z"/><path fill="#bcd" stroke="#234" d="M2 6l5-3h14l-7 3z"/>',
wand:'<path stroke="#e39a1a" stroke-width="1.500" d="M5 1v8M1 5h8M2 2l6 6M8 2 2 8"/><path fill="#dde" stroke="#456" stroke-width="1.200" d="m6 17 12-14 5 4-11 14c-3 2-8 0-6-4z"/>',
wandA:'<path fill="#f5b52a" stroke="#a06a10" d="M13 1h8l-5 6h3L7 15l4-8H8z"/><path fill="#ccd" stroke="#456" d="m2 20 9-9 3 3-8 8z"/><path fill="none" stroke="#2f7fa8" stroke-width="2" d="m12 23 4-11 5 11M14 19h5"/>',
vc:'<path fill="#4b91ab" stroke="#234" d="M2 9h13v13H2z"/><path fill="#e6eef2" stroke="#234" d="m2 9 5-6h15l-4 6M15 9h7v8h-7M22 3v16M15 3v6"/>',
cube:'<path fill="#59b1d6" stroke="#123" stroke-width="1.200" d="m3 7 10-4 8 3v12l-9 4-9-4z"/><path fill="#2f86ac" stroke="#123" d="m12 9 9-3v12l-9 4z"/><path fill="#8fd0e8" stroke="#123" d="m3 7 10-4 8 3-9 3z"/>',
wire:'<path fill="#f4f6f8" stroke="#667" stroke-width="1.200" d="m3 7 10-4 8 3v12l-9 4-9-4zM3 7l9 3 9-4M12 10v12"/><path fill="none" stroke="#667" stroke-dasharray="2 2" d="m4 18 8-4 8 4M12 3v11"/>',
eye:'<path fill="#eee" stroke="#888" d="M1 12c6-8 16-8 22 0-6 8-16 8-22 0z"/><circle cx="12" cy="12" r="4.500" fill="#555"/><path stroke="#777" d="M12 2v20"/>',
ballp:ball+'<path fill="#e8c25a" stroke="#555" d="m10 23 1-4 8-8 3 3-8 8z"/>',
ballc:'<path fill="#333" d="M1 15h22v8H1z"/><path fill="#fff" d="M3 16h4v3H3zM11 19h4v3h-4zM17 16h4v3h-4z"/><g transform="translate(1 -2) scale(.9)">'+ball+'</g>',
screen:'<path fill="#b8bfc6" stroke="#444" stroke-width="1.500" d="M1 3h22v14H1z"/><path fill="#444" d="M10 17h4v3h4v2H6v-2h4z"/>',
tape:'<path fill="#e4c04a" stroke="#654" d="m1 20 9-4 2 2-10 5z"/><circle cx="15" cy="10" r="8" fill="#5fa4bd" stroke="#345"/><circle cx="15" cy="10" r="4" fill="#d8c070" stroke="#345"/>',
perp:'<path stroke="#c4c4c4" stroke-width="2" d="M10 3v18M2 21h20"/>',
plane:'<path fill="#5aa3bd" stroke="#256" d="m1 17 9-4h13l-9 6z"/><path fill="none" stroke="#345" stroke-width="2" d="M12 17V4M8 8l4-6 4 6"/>',
flag:'<path fill="#f4f6f8" stroke="#667" stroke-width="1.500" d="M6 4H2v18h20V6h-4"/><path fill="#d0324a" d="M6 2h9l-3 3 6 7-3 3-6-7-3 3z"/>',
/* side tabs */
books:'<path fill="#fff" stroke="#333" stroke-width="1.400" d="m3 5 5-2 1 17-4 2zM9 5l5-2v17l-4 2zM15 5l6-2-1 16-5 3z"/><path stroke="#333" d="M6 6v14M12 6v14M18 6v13"/>',
folder:'<path fill="#fff" stroke="#333" stroke-width="1.500" d="M2 20V4h6l2 3h9v3M2 20l5-10h16l-4 10z"/>',
pal:'<path fill="#fff" stroke="#333" stroke-width="1.200" d="M2 2h20v20H2z"/><path fill="#f3dc3a" stroke="#333" d="M4 4h10v5H4zM16 4h4v4h-4zM4 18h10v3H4zM8 12h3v6H8zM16 12h4v9h-4z"/>',
globe:'<circle cx="12" cy="12" r="11" fill="#1d6484"/><path fill="none" stroke="#bfe0ee" stroke-width="1.500" d="m10 9 5 3-5 3zM4 12h3M17 12h3"/><circle cx="12" cy="5" r="3" fill="#8cc4dc" opacity=".5"/>',
tl2:'<path fill="none" stroke="#567" stroke-width="1.500" d="m8 9 11 12M16 10 5 21h15"/><path fill="none" stroke="#999" stroke-width="2" stroke-dasharray="2 1" d="M3 3l5 5M15 3c4 0 5 2 5 5"/>',
/* taskbar */
circ:'<circle cx="12" cy="12" r="9" fill="none" stroke="#fff" stroke-width="2.500"/>',
cam:'<path fill="#ddd" stroke="#111" d="M2 5h12v5H2zM1 10h15v9H4l-2-4z"/><path fill="#888" stroke="#111" d="m16 12 6-4v12l-6-4z"/><path stroke="#111" d="M5 5v14M9 5v14M12 7v10"/>',
snip:'<ellipse cx="11" cy="7" rx="8" ry="6" fill="#f1dede" stroke="#b77" transform="rotate(-25 11 7)"/><path stroke="#c33" stroke-width="1.500" d="M4 9 17 4"/><circle cx="10" cy="19" r="3" fill="none" stroke="#3b8fd0" stroke-width="2"/><circle cx="18" cy="17" r="3" fill="none" stroke="#3b8fd0" stroke-width="2"/><path stroke="#3b8fd0" stroke-width="2" d="M12 11v5M13 11l3 4"/>',
calc:'<rect x="3" y="0" width="18" height="24" fill="#9aa4ac"/><path fill="#45c8e0" d="M5 2h14v5H5z"/><path fill="#fff" d="M6 9h3v3H6zM10.500 9h3v3h-3zM15 9h3v3h-3zM6 13.500h3v3H6zM10.500 13.500h3v3h-3zM6 18h3v3H6zM10.500 18h3v3h-3z"/><path fill="#1c4f9c" d="M15 13.500h3V21h-3z"/>',
yi:'<circle cx="11" cy="11" r="11" fill="#24a4ee"/><path fill="#f05a8c" d="M23 15c0 5-3 8-9 8 3-1 6-3 6-6z"/><text x="11" y="16" text-anchor="middle" font-size="13" font-weight="700" fill="#fff" font-family="Noto Sans CJK SC">译</text>',
ie:'<circle cx="12" cy="12" r="11.500" fill="#5cc92c"/><path fill="none" stroke="#fff" stroke-width="3" d="M7 12.500h11c0-7-11-7-11 0 0 6 8 7 11 3"/><path fill="none" stroke="#dff5cf" d="M3 19C8 17 18 10 21 3"/>',
exp2:'<path fill="#f6bf3a" d="M0 2h8l2 2h14v18H0z"/><path fill="#fbd971" d="M0 8h24v6H0z"/><path fill="#3f95d4" d="M4 23v-9h16v9h-5v-5H9v5z"/>',
wx2:'<ellipse cx="9" cy="9" rx="8.500" ry="7.500" fill="#3cdb58"/><path fill="#3cdb58" d="m3 13 0 5 4-3z"/><ellipse cx="17" cy="16" rx="6.500" ry="5.500" fill="#e9e9e9"/><path fill="#e9e9e9" d="m19 20 3 3v-5z"/><g fill="#245"><circle cx="6" cy="7" r="1"/><circle cx="12" cy="7" r="1"/><circle cx="15" cy="15" r=".8"/><circle cx="19" cy="15" r=".8"/></g>',
xg:'<circle cx="12" cy="12" r="11.500" fill="#1c5a9c"/><g font-size="7" font-weight="700" fill="#fff" text-anchor="middle" font-family="Noto Sans CJK SC"><text x="12" y="10">熊工</text><text x="12" y="20">工具</text></g>',
todo:'<rect x="0" y="0" width="24" height="24" rx="4" fill="#fff"/><path fill="#1cc4c8" d="M9 5h11l-3 6h-8z"/><path fill="#1f6fe8" d="M4 8h9v3l-3 8H7l1-6H4zM14 9h4l-2 7z"/>',
obs:'<path fill="#c8c8c8" d="M0 0h24v24H0z"/><circle cx="12" cy="12" r="10" fill="none" stroke="#222" stroke-width="1.500" stroke-dasharray="14 3"/><circle cx="12" cy="12" r="7" fill="#333"/><circle cx="12" cy="12" r="2.500" fill="#ddd"/><path stroke="#ccc" stroke-width="1.500" d="M12 4v4M5 16l4-2M19 16l-4-2"/>',
sw:'<path fill="#d0202c" d="m1 4 10-4 12 4v16l-11 4L1 19z"/><path fill="#8c0f18" d="m14 7 9-3v16l-9 3z"/><text x="12" y="14" text-anchor="middle" font-size="12" font-weight="700" fill="#fff" font-family="Open Sans">SW</text><text x="15" y="22" text-anchor="middle" font-size="7" font-weight="700" fill="#fff" font-family="Open Sans">2022</text>',
up:'<path fill="none" stroke="#fff" stroke-width="2" d="m4 16 8-8 8 8"/>',
gr:'<path fill="#25e32a" d="M3 1h18v22H3z"/><path fill="#182060" d="m12 4 6 8-6 8-6-8z"/><path fill="#c03a9a" d="m12 8 4 4-4 5-3-5z"/><path stroke="#111" stroke-width="2" d="M8 1v3M16 1v3M8 20v3M16 20v3"/>',
qq:'<ellipse cx="12" cy="9" rx="6.500" ry="8" fill="#111"/><ellipse cx="12" cy="16" rx="8" ry="7" fill="#111"/><ellipse cx="12" cy="17" rx="5" ry="5" fill="#fff"/><path fill="#d82020" d="M5 11h14v3H5z"/><path fill="#f0a020" d="M9 8h6l-3 3zM5 21h6v2H5zM13 21h6v2h-6z"/><circle cx="10" cy="6" r="1.500" fill="#fff"/><circle cx="14" cy="6" r="1.500" fill="#fff"/>',
net:'<path fill="none" stroke="#fff" stroke-width="1.500" d="M6 4h17v13H3v-7M14 17v4M9 21h10M2 3h5v6H2z"/>',
vol:'<path fill="none" stroke="#fff" stroke-width="1.500" d="M2 9h4l5-5v16l-5-5H2zM14 9c2 2 2 4 0 6M17 6c3 4 3 8 0 12M20 4c4 5 4 11 0 16"/>'
};
I.homered=I.home+'<circle cx="20" cy="4" r="3.500" fill="#e3131f"/>';
I.qq2=I.qq+'<circle cx="17" cy="17" r="6" fill="#e03030"/><path fill="#fff" d="M13 16h8v2h-8z"/>';
/* selection filters: glyph plus a funnel */
const F={f1:'<circle cx="7" cy="9" r="3" fill="#3a89a5"/>',f2:'<path stroke="#3a89a5" stroke-width="2" d="M8 3v18"/>',f3:'<path fill="#3a93b3" stroke="#245" d="M2 4h15v14H2z"/>',
f4:'<path fill="#3a93b3" stroke="#245" d="m1 12 8-8 4 2 5-2 2 8-7 7-4-2-4 3z"/>',f5:'<path fill="#3a93b3" stroke="#245" d="m3 7 6-4 9 2v12l-6 4-9-3z"/><path fill="none" stroke="#245" d="m3 7 9 3 6-5M12 10v11"/>',
f6:'<path stroke="#3a89a5" stroke-width="1.800" stroke-dasharray="6 2 2 2" d="M2 21 18 3"/>',f7:'<path fill="#7ab" stroke="#245" d="m3 7 6-3v14l-6 3zM11 6l5-2v13l-5 3z"/>',f8:'<path fill="#3a93b3" stroke="#245" d="M3 7h7v7H3z"/>',
f9:'<path fill="none" stroke="#3a89a5" stroke-width="2" d="M17 3H4v13c0 3 2 5 5 5h4"/>',f10:'<path fill="none" stroke="#444" stroke-width="1.500" d="M5 21V5h14M3 3h4v4H3zM17 3h4v4h-4z"/>',f11:'<path stroke="#3a89a5" stroke-width="1.800" d="M2 21 18 3"/><path fill="#444" d="M5 11h8v2H5z"/>',
f12:'<circle cx="11" cy="12" r="6" fill="none" stroke="#345" stroke-width="2"/><circle cx="11" cy="12" r="2" fill="#345"/><path stroke="#345" stroke-width="1.500" d="M11 2v20M1 12h20"/>',f13:'<path fill="none" stroke="#444" stroke-width="1.400" d="M3 3v18M3 5h5v14H3M10 8h10M10 16h4M20 5v10"/>',
f14:'<path fill="none" stroke="#333" stroke-width="2" d="m3 13 8-9 6 8-5 6z"/>',f15:'<path fill="none" stroke="#333" stroke-width="2" d="M2 13l4 8L14 3h8"/>',f16:'<path fill="none" stroke="#333" stroke-width="1.400" d="M1 4h20v10H1zM11 4v10M4 11l3-4 3 4zM15 7v5M18 7v5"/>',
f17:'<circle cx="13" cy="9" r="6.500" fill="none" stroke="#333" stroke-width="1.400"/><path fill="none" stroke="#333" stroke-width="1.500" d="M10 12V6l5 6V6M8 14l-6 8"/>',f18:'<path fill="none" stroke="#333" stroke-width="1.500" d="M3 3h16v15H3z"/><path fill="none" stroke="#111" stroke-width="2.200" d="m7 15 4-10 4 10M8 12h6"/>',
f19:'<path fill="none" stroke="#333" stroke-width="1.800" d="m1 19 8-12 2 8 8-9M9 7h12M4 17l6-7"/>',f20:'<path fill="none" stroke="#333" stroke-width="1.500" d="M3 2v10h10L3 4M4 14v8M8 14v8M12 14v8M3 18h10"/>',
f21:'<path fill="none" stroke="#333" stroke-width="1.500" d="M5 10a7 7 0 0 1 14 0l-4 6-3-6-3 6zM7 14l-4 7M4 10h16"/>',f22:'<path fill="none" stroke="#444" stroke-width="1.500" stroke-dasharray="2 1" d="M4 3h14v14H4z"/><path fill="none" stroke="#444" stroke-width="1.500" d="m6 17 5 5 5-5M7 4v13"/>',
f23:'<path fill="none" stroke="#333" stroke-width="1.500" d="M3 3h17v17H3zM6 16l4-9 3 9M7 13h5"/><circle cx="16" cy="7" r="1.500" fill="none" stroke="#333"/>',f24:'<circle cx="11" cy="11" r="8" fill="#fff" stroke="#222" stroke-width="1.300"/><path fill="#222" d="M11 11V3a8 8 0 0 1 8 8zM11 11v8a8 8 0 0 1-8-8z"/>',
f25:'<path stroke="#333" stroke-width="2" d="M1 8h11"/><path fill="#3a93b3" stroke="#245" d="M12 4h8v9h-8z"/>',f26:'<path stroke="#333" stroke-width="2" d="M1 8h21"/><path fill="#3a93b3" stroke="#245" d="M7 4h8v9H7z"/>',
f27:'<path fill="#3a93b3" stroke="#245" d="M1 3h18v16H1z"/><path fill="#fff" stroke="#222" d="m11 13 8-9v13z"/>',f28:'<path stroke="#3a89a5" stroke-width="2" d="M4 2v20"/><path fill="#ccc" stroke="#222" d="m11 12 8-9v13zM15 8v7"/>',f29:'<circle cx="4" cy="8" r="2.500" fill="#3a89a5"/><path fill="#ccc" stroke="#222" d="m11 12 8-9v13zM15 8v7"/>'};
const svg=(b)=>'<svg viewBox="0 0 24 24" aria-hidden="true">'+b+'</svg>';
const ic=(n,s)=>'<i class="ic '+s+'">'+svg(I[n])+'</i>';
document.querySelectorAll('[data-ic]').forEach(e=>e.innerHTML=svg(I[e.dataset.ic]));
const $=id=>document.getElementById(id);
const caret='<button class="caret-b" aria-label="展开"></button>';
const tool=n=>'<button class="tool" aria-label="'+n+'">'+ic(n,'s20')+'</button>';
$('std').innerHTML=tool('homered')+['new','open','save','print','undo','redo'].map(n=>tool(n)+caret).join('')+'<div class="selgrp d-flex">'+tool('cur')+caret+'</div>'+tool('light')+tool('list')+tool('gear')+caret;

const R=[['rcol-first',['','目录']],
['',['r1','草图标注'],['r2','外形标注'],['r3','手动折弯标注']],['',['A','保存DXF_PDF'],['st','保存STEP_IGS'],['ep','保存EPRT']],['rcol-140',['multi','保存多实体'],['dw','直接展开到DWG'],['ring','修改圆孔直径']],
['',['bx','删除圆角'],['sq2','方通拉伸切除'],['sqb','方通倒圆角']],['',['br','方通钣金卡扣'],['gp','方通公母卡扣'],['xx','方通交叉卡扣']],['',['lines','实体方通排版'],['n01','激光刻字打标'],['clip','写入属性报价']],
['',['split','图号分离'],['puzzle','转换钣金'],['J','修改折弯扣除']],['',['dash','修改实体厚度'],['puzzle','修改钣金厚度'],['mon','切换固定面']],['',['nav','一键切角打标'],['chart','删除特征'],['door','生成钣金门']],
['',['plaque','钣金工程图'],['sheet','生成工程图'],['sheets','多实体工程图']],['rcol-126',['fold','装配存多实体'],['rows','写入装配数量'],['exp','装配导出BOM']],['rcol-108',['blocks','自动闭合角'],['trash','清除颜色'],['win','随机上色']],
['',['fc','关闭所有文档'],['edit','选择相对面'],['gearb','设置']],['',['tools','视频教程V5.0']]];
$('ribbon').innerHTML=R.map(c=>'<div class="rcol '+c[0]+'">'+c.slice(1).map(([i,t])=>'<button class="ritem">'+(i?ic(i,'s20'):'')+'<span>'+t+'</span></button>').join('')+'</div>').join('');

let tr='<li class="t1"><span>体</span><span>(默认)</span><span>&lt;默认_显示状态-1&gt;</span></li>'+[['t2','History'],['t3','传感器'],['t3','注解'],['t3','前视基准面'],['t3','上视基准面'],['t3','右视基准面'],['t3','原点']].map(([c,t])=>'<li class="'+c+'"><span>'+t+'</span></li>').join('');
for(let i=1;i<13;i++)tr+='<li class="t4"><span>固定)</span><span class="nm">包装机-0'+String(i).padStart(2,'0')+'&lt;1&gt;</span><span class="ar">-&gt;?</span><span>(默认)</span><span>&lt;&lt;默认&gt;</span><span>_显示状态</span></li>';
$('tree').innerHTML=tr+'<li class="t3"><span>配合</span></li>';

$('hud').innerHTML='s3d g3d cg cg ck cg cgx cg cg cg sur zf za sec wand wandA vc , *cube wire eye , ballp ballc , screen , save list tape perp plane flag'.split(' ').map(n=>n==','?caret.replace('caret-b','caret-b dim'):n[0]=='*'?'<button class="on" aria-label="着色">'+ic(n.slice(1),'s22')+'</button>':'<button aria-label="'+n+'">'+ic(n,'s20')+'</button>').join('');
$('vtabs').innerHTML='home books folder pal ball props globe tl2 geark'.split(' ').map(n=>'<button class="'+(n=='tl2'?'on':'')+'" aria-label="'+n+'">'+ic(n,n=='ball'?'s22':'s20')+'</button>').join('');

const C=[['g1','打开计算器','lv','批量替换图框'],['g1','截图','lv','合并工程图'],['vi','关闭所有打开的文件夹','lv','PDF合并、分割、打印'],['pk','关闭不活动文档','lv','批量写入属性'],['pk','结束进程(无需安装杀毒)','lv','批量报价'],['g2','手动方通排版','lv','零件导出BOM'],['g2','装配体方通排版','lv','批量工程图'],['g2','方通生成门板','lv','批量合集(保存格式)'],['g2','选择方通类型','lv','批量打开格式'],['pe','装配中子组件变多实体','lv','批量保存PDF、DWG格式'],['pe','装配中多实体变子组件','lv','批量转换钣金'],['rd','修改全局变量','lv','装配体批量改名'],['ye','选择部件在BOM中排除','lv','批量合并DWG/DXF'],['ye','取消部件在BOM中排除','lv','图文简表'],['cy','获得部件尺寸','lv','装配中替换零件'],['cy','获得组件尺寸','lv','批量打孔'],['cy','获取方通厚度','lc','装配体爆炸'],['ye','装配体名称排序','lc','退出爆炸'],['ye','装配体或多实体全部显示','ye','特征改中文名'],['lc','装配体打包','ye','固定组件'],['pk','删除装配体所有配合关系','pk focus','保存虚拟组件在外部'],['pe','解析全部轻量化零件','gy','常用工具']];
const half=t=>t.replace(/[A-Z\/()]+/g,'<small>$&</small>');
$('cmds').innerHTML=C.map(r=>'<button class="'+r[0]+'">'+half(r[1])+'</button><button class="'+r[2]+'">'+half(r[3])+'</button>').join('');

$('filters').innerHTML='<button class="sel" aria-label="选择">'+ic('cur','s20')+'</button>'+caret+'<span class="f">'+ic('curg','s22')+'</span><span class="sep"></span>'+Object.keys(F).map((k,i)=>'<button class="f'+(i?'':' on')+'" aria-label="过滤 '+(i+1)+'"><i class="ic s20">'+svg(F[k]+fun)+'</i></button>').join('');

$('apps').innerHTML=[['circ',''],['cam',''],['snip',''],['calc',''],['yi',''],['ie','run'],['exp2','run'],['wx2','hot'],['xg','hot'],['todo','run'],['obs','run'],['sw','run cur']].map(([n,c])=>'<button class="app '+c+'" aria-label="'+n+'">'+ic(n,n=='circ'?'s22':/xg|sw|todo|obs|yi|wx2/.test(n)?'s30':'s26')+'</button>').join('');
$('tray').innerHTML=ic('up','s18')+ic('gr','s20')+ic('todo','s20')+ic('qq2','s20')+ic('qq','s20')+'<span class="trayrest"></span>'+ic('net','s22')+ic('vol','s20')+'<span class="ime">英</span><span class="imebox">五</span><div class="clock"><div>15:57</div><div>2023-06-</div></div>';
</script>
</body>
</html>
